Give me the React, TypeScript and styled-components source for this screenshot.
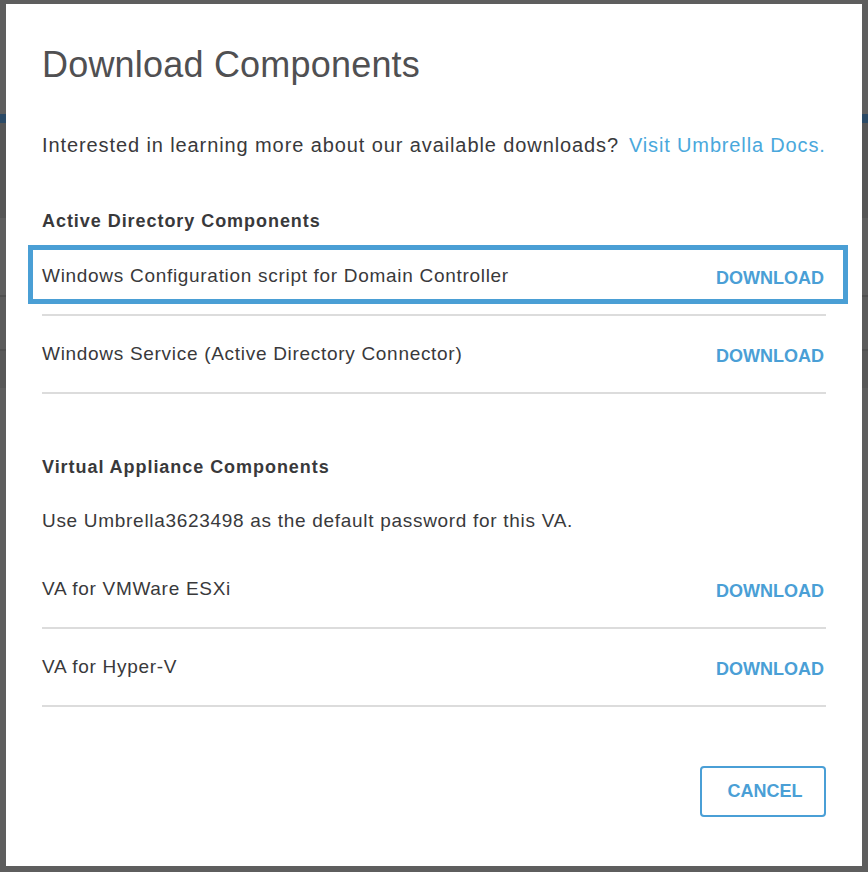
import React from 'react';
import styled, { createGlobalStyle } from 'styled-components';

const GlobalStyle = createGlobalStyle`
  html, body {
    margin: 0;
    padding: 0;
    background: #5e5e5e;
  }
  * {
    box-sizing: border-box;
  }
`;

const Screen = styled.div`
  position: relative;
  width: 868px;
  height: 872px;
  overflow: hidden;
  background: #5e5e5e;
  font-family: 'Liberation Sans', Arial, sans-serif;
`;

const PageBehind = styled.div`
  display: flex;
  flex-direction: column;
  padding-top: 114px;
`;

const Band = styled.div<{ $h: number; $bg: string }>`
  height: ${(p) => p.$h}px;
  background: ${(p) => p.$bg};
`;

const Modal = styled.div`
  position: absolute;
  left: 6px;
  top: 4px;
  width: 856px;
  height: 862px;
  background: #ffffff;
  padding: 39px 36px 0 36px;
  display: flex;
  flex-direction: column;
  color: #39393b;
`;

const Title = styled.h1`
  margin: 0;
  font-size: 36px;
  line-height: 44px;
  font-weight: 300;
  color: #505052;
  letter-spacing: 0.2px;
`;

const Intro = styled.p`
  margin: 44px 0 0;
  font-size: 20px;
  line-height: 28px;
  letter-spacing: 0.9px;
  white-space: nowrap;
  color: #39393b;
`;

const DocsLink = styled.a`
  color: #4aa8dc;
  text-decoration: none;
  margin-left: 10px;
  letter-spacing: 0.85px;
`;

const SectionTitle = styled.h2<{ $gap: number }>`
  margin: ${(p) => p.$gap}px 0 0;
  font-size: 18px;
  line-height: 24px;
  font-weight: 700;
  letter-spacing: 0.95px;
  color: #39393b;
`;

const Note = styled.p`
  margin: 30px 0 0;
  font-size: 19px;
  line-height: 24px;
  letter-spacing: 0.7px;
  color: #39393b;
`;

const List = styled.div<{ $gap: number }>`
  margin-top: ${(p) => p.$gap}px;
  display: flex;
  flex-direction: column;
`;

const Row = styled.div<{ $focused?: boolean }>`
  position: relative;
  height: 78px;
  display: flex;
  align-items: center;
  justify-content: space-between;
  border-bottom: 2px solid #dcdcdc;

  &::before {
    content: '';
    display: ${(p) => (p.$focused ? 'block' : 'none')};
    position: absolute;
    left: -14px;
    right: -22px;
    top: 7px;
    bottom: 10px;
    border: 5px solid #4a9fd5;
    pointer-events: none;
  }
`;

const RowLabel = styled.span`
  font-size: 19px;
  letter-spacing: 0.7px;
  color: #39393b;
  margin-top: -1px;
`;

const DownloadLink = styled.a`
  font-size: 18px;
  font-weight: 700;
  color: #4a9fd6;
  text-decoration: none;
  margin-top: 4px;
  margin-right: 2px;
`;

const Footer = styled.div`
  margin-top: 59px;
  display: flex;
  justify-content: flex-end;
`;

const CancelButton = styled.button`
  width: 126px;
  height: 51px;
  border: 2px solid #4a9fd6;
  border-radius: 4px;
  background: #ffffff;
  color: #4a9fd6;
  font-family: 'Liberation Sans', Arial, sans-serif;
  font-size: 18px;
  font-weight: 700;
  padding: 0 0 0 4px;
  cursor: pointer;
`;

type Item = { label: string; focused?: boolean };

const adItems: Item[] = [
  { label: 'Windows Configuration script for Domain Controller', focused: true },
  { label: 'Windows Service (Active Directory Connector)' },
];

const vaItems: Item[] = [{ label: 'VA for VMWare ESXi' }, { label: 'VA for Hyper-V' }];

const DownloadRow = ({ item }: { item: Item }) => (
  <Row $focused={item.focused}>
    <RowLabel>{item.label}</RowLabel>
    <DownloadLink href="#">DOWNLOAD</DownloadLink>
  </Row>
);

const App = () => {
  return (
    <Screen>
      <GlobalStyle />
      <PageBehind>
        <Band $h={9} $bg="#2b4a66" />
        <Band $h={95} $bg="#565656" />
        <Band $h={77} $bg="#5e5e5e" />
        <Band $h={2} $bg="#505050" />
        <Band $h={52} $bg="#5c5c5c" />
        <Band $h={2} $bg="#505050" />
        <Band $h={37} $bg="#585858" />
      </PageBehind>

      <Modal role="dialog">
        <Title>Download Components</Title>
        <Intro>
          Interested in learning more about our available downloads?
          <DocsLink href="#">Visit Umbrella Docs.</DocsLink>
        </Intro>

        <SectionTitle $gap={50}>Active Directory Components</SectionTitle>
        <List $gap={5}>
          {adItems.map((item) => (
            <DownloadRow key={item.label} item={item} />
          ))}
        </List>

        <SectionTitle $gap={61}>Virtual Appliance Components</SectionTitle>
        <Note>Use Umbrella3623498 as the default password for this VA.</Note>
        <List $gap={18}>
          {vaItems.map((item) => (
            <DownloadRow key={item.label} item={item} />
          ))}
        </List>

        <Footer>
          <CancelButton>CANCEL</CancelButton>
        </Footer>
      </Modal>
    </Screen>
  );
};

export default App;
